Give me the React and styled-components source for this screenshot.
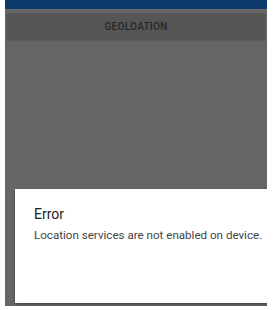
import React from "react";
import styled, { createGlobalStyle } from "styled-components";

const Global = createGlobalStyle`
  html, body {
    margin: 0;
    padding: 0;
    background: #ffffff;
    font-family: Roboto, "Liberation Sans", sans-serif;
  }
`;

const Page = styled.div`
  width: 273px;
  height: 310px;
  padding: 0 6px 0 5px;
  box-sizing: border-box;
`;

const Device = styled.div`
  display: flex;
  flex-direction: column;
  height: 306px;
  position: relative;
  overflow: hidden;
  background: #666666;
`;

const StatusBar = styled.div`
  height: 9px;
  background: #0b3a6b;
  flex-shrink: 0;
`;

const Toolbar = styled.div`
  margin: 4px 2px 0 2px;
  height: 27px;
  background: #565656;
  box-shadow: 0 1px 2px rgba(0, 0, 0, 0.15);
  display: flex;
  align-items: center;
  justify-content: center;
`;

const Title = styled.span`
  font-size: 10px;
  font-weight: 500;
  letter-spacing: 0.3px;
  color: #262626;
`;

const Content = styled.div`
  flex: 1;
`;

const Dialog = styled.div`
  position: absolute;
  left: 10px;
  right: -20px;
  top: 189px;
  height: 114px;
  background: #ffffff;
  box-shadow: 0 1px 3px rgba(0, 0, 0, 0.4);
  padding: 16px 19px;
  box-sizing: border-box;
`;

const DialogTitle = styled.div`
  font-size: 14px;
  color: #222222;
  line-height: 18px;
`;

const DialogText = styled.div`
  margin-top: 5px;
  font-size: 11.6px;
  color: #444444;
  white-space: nowrap;
`;

export default function App() {
  return (
    <Page>
      <Global />
      <Device>
        <StatusBar />
        <Toolbar>
          <Title>GEOLOATION</Title>
        </Toolbar>
        <Content />
        <Dialog>
          <DialogTitle>Error</DialogTitle>
          <DialogText>Location services are not enabled on device.</DialogText>
        </Dialog>
      </Device>
    </Page>
  );
}
